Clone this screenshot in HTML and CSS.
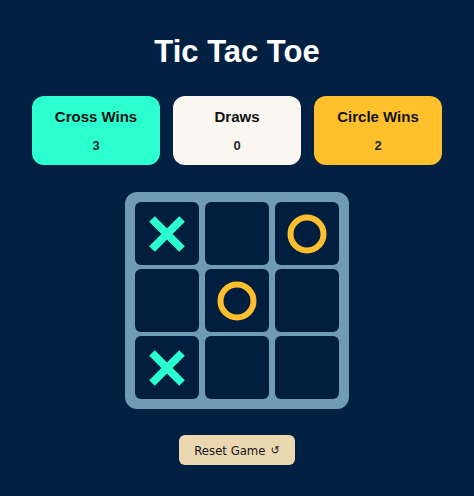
FILE: index.html
```html
<!DOCTYPE html>
<html lang="en">
<head>
<meta charset="utf-8">
<title>Tic Tac Toe</title>
<link rel="stylesheet" href="styles.css">
</head>
<body>
<main class="app">
  <h1 class="title">Tic Tac Toe</h1>
  <section class="scores">
    <div class="card card-cross">
      <div class="card-label">Cross Wins</div>
      <div class="card-value">3</div>
    </div>
    <div class="card card-draw">
      <div class="card-label">Draws</div>
      <div class="card-value">0</div>
    </div>
    <div class="card card-circle">
      <div class="card-label">Circle Wins</div>
      <div class="card-value">2</div>
    </div>
  </section>
  <section class="board">
    <div class="cell"><svg class="mark" viewBox="0 0 40 40"><path d="M5 5 L35 35 M35 5 L5 35" class="x-stroke"/></svg></div>
    <div class="cell"></div>
    <div class="cell"><svg class="mark" viewBox="0 0 40 40"><circle cx="20" cy="20" r="16.5" class="o-stroke"/></svg></div>
    <div class="cell"></div>
    <div class="cell"><svg class="mark" viewBox="0 0 40 40"><circle cx="20" cy="20" r="16.5" class="o-stroke"/></svg></div>
    <div class="cell"></div>
    <div class="cell"><svg class="mark" viewBox="0 0 40 40"><path d="M5 5 L35 35 M35 5 L5 35" class="x-stroke"/></svg></div>
    <div class="cell"></div>
    <div class="cell"></div>
  </section>
  <button class="reset" type="button">Reset Game <span class="reset-icon">↺</span></button>
</main>
</body>
</html>
```

FILE: styles.css
```css
html, body {
  margin: 0;
  padding: 0;
  background: #022042;
}
body {
  font-family: "Liberation Sans", Arial, sans-serif;
  color: #ffffff;
}
.app {
  display: flex;
  flex-direction: column;
  align-items: center;
  padding-top: 36px;
}
.title {
  margin: 0;
  font-family: "Liberation Sans", Arial, sans-serif;
  font-size: 31px;
  line-height: 31px;
  font-weight: bold;
  color: #ffffff;
}
.scores {
  display: flex;
  gap: 13px;
  margin-top: 29px;
}
.card {
  width: 128px;
  height: 69px;
  box-sizing: border-box;
  border-radius: 12px;
  padding-top: 12px;
  display: flex;
  flex-direction: column;
  align-items: center;
  color: #111111;
  font-family: "Liberation Sans", Arial, sans-serif;
}
.card-cross { background: #2bffcf; }
.card-draw { background: #faf6f0; }
.card-circle { background: #fec12c; }
.card-label {
  font-size: 15px;
  line-height: 18px;
  font-weight: bold;
}
.card-value {
  margin-top: 12px;
  font-size: 13px;
  line-height: 15px;
  font-weight: bold;
  color: #1b2a33;
}
.board {
  margin-top: 27px;
  background: #6f9bb5;
  border-radius: 12px;
  padding: 10px;
  display: grid;
  grid-template-columns: repeat(3, 64px);
  grid-template-rows: repeat(3, 63px);
  column-gap: 6px;
  row-gap: 4px;
}
.cell {
  background: #021e3e;
  border-radius: 6px;
  display: flex;
  align-items: center;
  justify-content: center;
}
.mark {
  width: 40px;
  height: 40px;
  display: block;
}
.x-stroke {
  stroke: #2bffcf;
  stroke-width: 8;
  fill: none;
}
.o-stroke {
  stroke: #fdbf2d;
  stroke-width: 6;
  fill: none;
}
.reset {
  margin-top: 26px;
  width: 116px;
  height: 30px;
  border: none;
  border-radius: 6px;
  background: #ecd8b0;
  color: #15151f;
  font-family: "DejaVu Sans Condensed", "DejaVu Sans", sans-serif;
  font-size: 13px;
  padding: 0;
  display: flex;
  align-items: center;
  justify-content: center;
}
.reset-icon {
  font-family: "DejaVu Sans", sans-serif;
  font-size: 11px;
  margin-left: 5px;
}
```
